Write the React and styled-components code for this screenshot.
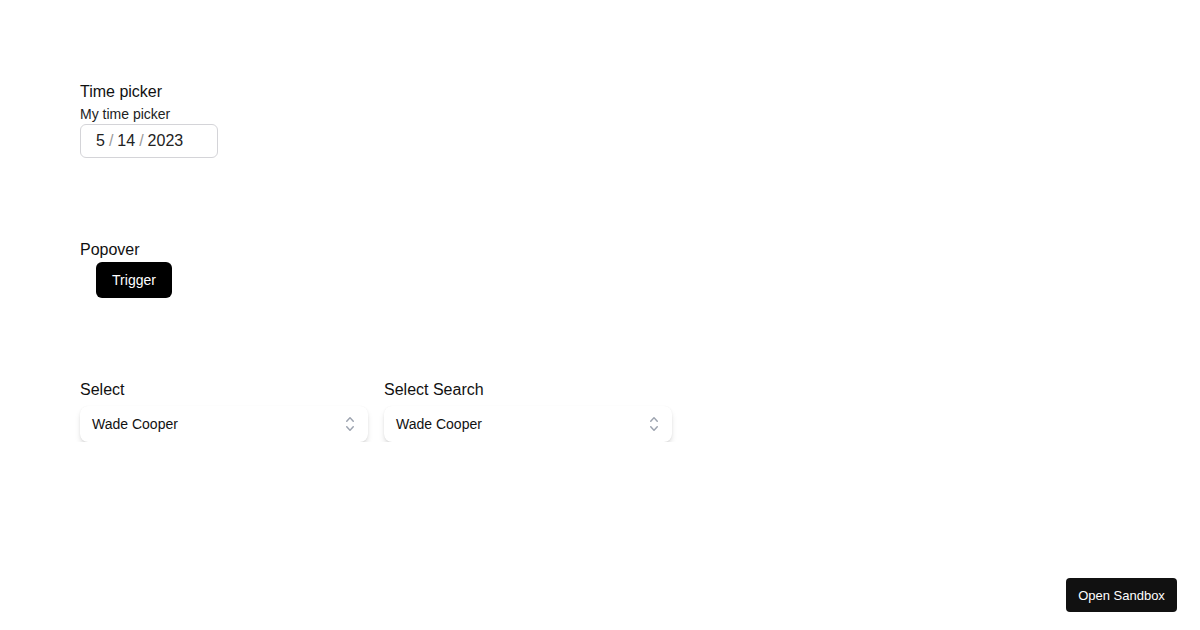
import React from "react";
import styled, { createGlobalStyle } from "styled-components";

const Global = createGlobalStyle`
  html, body { margin: 0; padding: 0; background: #fff; }
  body { font-family: "Liberation Sans", Arial, sans-serif; color: #111; }
  * { box-sizing: border-box; }
`;

const Page = styled.div`
  display: flex;
  flex-direction: column;
  padding: 83px 80px 0;
`;

const Section = styled.section`
  display: flex;
  flex-direction: column;
  align-items: flex-start;
  margin-top: ${(p) => p.$gap || 0}px;
`;

const Title = styled.div`
  font-size: 16px;
  line-height: 18px;
  color: #111;
`;

const SubLabel = styled.label`
  font-size: 14px;
  line-height: 18px;
  margin-top: 4px;
  color: #222;
`;

const DateBox = styled.div`
  margin-top: 1px;
  width: 138px;
  height: 34px;
  border: 1px solid #d4d4d8;
  border-radius: 6px;
  display: flex;
  align-items: center;
  padding-left: 15px;
  font-size: 16px;
  color: #222;
  gap: 4px;
`;

const Slash = styled.span`
  color: #9a9a9a;
`;

const TriggerButton = styled.button`
  margin-top: 3px;
  margin-left: 16px;
  height: 36px;
  width: 76px;
  border: none;
  border-radius: 6px;
  background: #000;
  color: #fff;
  font-family: "Liberation Sans", Arial, sans-serif;
  font-size: 14px;
  cursor: pointer;
`;

const SelectRow = styled.div`
  display: flex;
  gap: 16px;
`;

const SelectBlock = styled.div`
  display: flex;
  flex-direction: column;
  width: 288px;
`;

const SelectButton = styled.button`
  margin-top: 7px;
  width: 100%;
  height: 36px;
  border: none;
  border-radius: 8px;
  background: #fff;
  box-shadow: 0 4px 6px -1px rgba(0,0,0,0.13), 0 2px 4px -2px rgba(0,0,0,0.13), 0 0 1px rgba(0,0,0,0.06);
  display: flex;
  align-items: center;
  justify-content: space-between;
  padding: 0 8px 0 12px;
  font-family: "Liberation Sans", Arial, sans-serif;
  font-size: 14px;
  line-height: 20px;
  color: #111;
  text-align: left;
`;

const Chevron = styled.svg`
  width: 20px;
  height: 20px;
  color: #9ca3af;
`;

const Sandbox = styled.button`
  position: fixed;
  right: 23px;
  bottom: 18px;
  width: 111px;
  height: 34px;
  background: #111;
  color: #fff;
  border: none;
  border-radius: 4px;
  font-family: "Liberation Sans", Arial, sans-serif;
  font-size: 13px;
`;

function ChevronUpDown() {
  return (
    <Chevron viewBox="0 0 20 20" fill="currentColor" aria-hidden="true">
      <path
        fillRule="evenodd"
        d="M10 3a.75.75 0 01.55.24l3.25 3.5a.75.75 0 11-1.1 1.02L10 4.852 7.3 7.76a.75.75 0 01-1.1-1.02l3.25-3.5A.75.75 0 0110 3zm-3.76 9.2a.75.75 0 011.06.04l2.7 2.908 2.7-2.908a.75.75 0 111.1 1.02l-3.25 3.5a.75.75 0 01-1.1 0l-3.25-3.5a.75.75 0 01.04-1.06z"
        clipRule="evenodd"
      />
    </Chevron>
  );
}

function Select({ label, value }) {
  return (
    <SelectBlock>
      <Title>{label}</Title>
      <SelectButton>
        <span>{value}</span>
        <ChevronUpDown />
      </SelectButton>
    </SelectBlock>
  );
}

export default function App() {
  return (
    <>
      <Global />
      <Page>
        <Section>
          <Title>Time picker</Title>
          <SubLabel>My time picker</SubLabel>
          <DateBox>
            <span>5</span>
            <Slash>/</Slash>
            <span>14</span>
            <Slash>/</Slash>
            <span>2023</span>
          </DateBox>
        </Section>
        <Section $gap={83}>
          <Title>Popover</Title>
          <TriggerButton>Trigger</TriggerButton>
        </Section>
        <Section $gap={83}>
          <SelectRow>
            <Select label="Select" value="Wade Cooper" />
            <Select label="Select Search" value="Wade Cooper" />
          </SelectRow>
        </Section>
      </Page>
      <Sandbox>Open Sandbox</Sandbox>
    </>
  );
}
